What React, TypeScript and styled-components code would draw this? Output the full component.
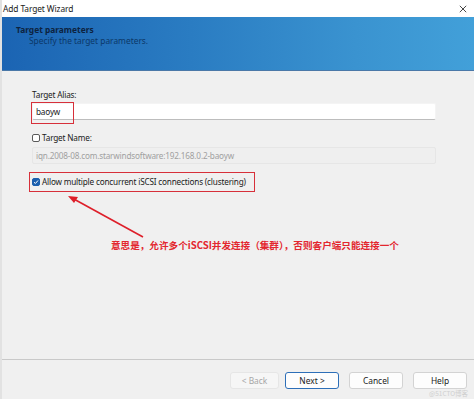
import React from "react";
import styled, { createGlobalStyle } from "styled-components";

const Global = createGlobalStyle`
  html, body { margin: 0; padding: 0; background: #f0f0f0; }
  body { font-family: "Noto Sans", "Open Sans", sans-serif; }
`;

const Window = styled.div`
  position: relative;
  width: 474px;
  height: 399px;
  background: #f0f0f0;
  display: flex;
  flex-direction: column;
  overflow: hidden;
  border-left: 2px solid #e2e2e2;
  box-sizing: border-box;
`;

const TitleBar = styled.div`
  height: 17px;
  background: #ffffff;
  display: flex;
  align-items: center;
  justify-content: space-between;
  padding: 0 7px 0 1px;
  font-size: 8.4px;
  letter-spacing: -0.1px;
  color: #1a1a1a;
  flex-shrink: 0;
`;

const Header = styled.div`
  height: 54px;
  flex-shrink: 0;
  background: linear-gradient(90deg, #1b64b3 0%, #2a7cc2 40%, #3a93d0 75%, #42a0d9 100%);
  border-bottom: 1px solid #4a78a8;
  display: flex;
  flex-direction: column;
  padding: 7px 0 0 14px;
  box-sizing: border-box;
`;

const HeaderTitle = styled.div`
  font-size: 8.4px;
  font-weight: 700;
  color: #0d2340;
  line-height: 11px;
`;

const HeaderSub = styled.div`
  font-size: 8.4px;
  color: #0c3868;
  line-height: 11px;
  padding-left: 13px;
`;

const Content = styled.div`
  position: relative;
  flex: 1;
  display: flex;
  flex-direction: column;
  padding: 18px 38px 0 30px;
  font-size: 8.2px;
  letter-spacing: -0.18px;
  color: #1a1a1a;
`;

const Label = styled.div`
  line-height: 11px;
  height: 11px;
  margin-bottom: 3px;
`;

const TextInput = styled.div<{ $disabled?: boolean }>`
  height: 17px;
  box-sizing: border-box;
  display: flex;
  align-items: center;
  padding-left: 3px;
  background: ${(p) => (p.$disabled ? "#efefef" : "#ffffff")};
  border: 1px solid ${(p) => (p.$disabled ? "#e6e6e6" : "#f4f4f4")};
  border-bottom: 1px solid ${(p) => (p.$disabled ? "#e6e6e6" : "#bdbdbd")};
  border-radius: 2px;
  color: ${(p) => (p.$disabled ? "#a0a0a0" : "#1a1a1a")};
`;

const CheckRow = styled.label<{ $top: number; $bottom?: number }>`
  display: flex;
  align-items: center;
  gap: 2px;
  margin-top: ${(p) => p.$top}px;
  margin-bottom: ${(p) => p.$bottom ?? 0}px;
  line-height: 11px;
`;

const Box = styled.span<{ $checked?: boolean }>`
  width: 8px;
  height: 8px;
  box-sizing: border-box;
  border-radius: 2px;
  border: 1px solid ${(p) => (p.$checked ? "#1b5fae" : "#5a5a5a")};
  background: ${(p) => (p.$checked ? "#1b5fae" : "#ffffff")};
  display: inline-flex;
  align-items: center;
  justify-content: center;
  flex-shrink: 0;
`;

const Note = styled.div`
  margin: 52px 0 0 79px;
  font-family: "Noto Sans CJK SC", "Noto Sans", sans-serif;
  font-weight: 700;
  font-size: 9.6px;
  letter-spacing: 0;
  color: #e3262e;
  line-height: 12px;
  white-space: nowrap;
`;

const Highlight = styled.div<{ $x: number; $y: number; $w: number; $h: number }>`
  position: absolute;
  left: ${(p) => p.$x}px;
  top: ${(p) => p.$y}px;
  width: ${(p) => p.$w}px;
  height: ${(p) => p.$h}px;
  border: 1.5px solid #d7303a;
  box-sizing: border-box;
  pointer-events: none;
`;

const ArrowSvg = styled.svg`
  position: absolute;
  left: 0;
  top: 0;
  pointer-events: none;
`;

const Footer = styled.div`
  height: 40px;
  flex-shrink: 0;
  border-top: 1px solid #c9c9c9;
  display: flex;
  justify-content: flex-end;
  align-items: flex-start;
  padding: 12px 7px 0 0;
  gap: 10px;
  box-sizing: border-box;
`;

const Button = styled.div<{ $variant?: "default" | "primary" | "disabled"; $w?: number; $mr?: number }>`
  width: ${(p) => p.$w ?? 54}px;
  height: 17px;
  margin-right: ${(p) => p.$mr ?? 0}px;
  box-sizing: border-box;
  border-radius: 3px;
  display: flex;
  align-items: center;
  justify-content: center;
  font-size: 8.4px;
  background: ${(p) => (p.$variant === "disabled" ? "#f6f6f6" : "#fdfdfd")};
  color: ${(p) => (p.$variant === "disabled" ? "#a6a6a6" : "#1a1a1a")};
  border: 1px solid
    ${(p) =>
      p.$variant === "primary" ? "#2d6fb8" : p.$variant === "disabled" ? "#e6e6e6" : "#d3d3d3"};
`;

const Watermark = styled.div`
  position: absolute;
  right: 6px;
  bottom: 1px;
  font-family: "Noto Sans CJK SC", "Noto Sans", sans-serif;
  font-size: 6.5px;
  color: #cfcfcf;
`;

export default function App() {
  return (
    <>
      <Global />
      <Window>
        <TitleBar>
          <span>Add Target Wizard</span>
          <svg width="8" height="8" viewBox="0 0 8 8">
            <path d="M0.8 0.8 L7.2 7.2 M7.2 0.8 L0.8 7.2" stroke="#333" strokeWidth="0.9" />
          </svg>
        </TitleBar>
        <Header>
          <HeaderTitle>Target parameters</HeaderTitle>
          <HeaderSub>Specify the target parameters.</HeaderSub>
        </Header>
        <Content>
          <Label>Target Alias:</Label>
          <TextInput>baoyw</TextInput>
          <CheckRow $top={12} $bottom={4}>
            <Box />
            <span>Target Name:</span>
          </CheckRow>
          <TextInput $disabled>
            iqn.2008-08.com.starwindsoftware:192.168.0.2-baoyw
          </TextInput>
          <CheckRow $top={12}>
            <Box $checked>
              <svg width="6" height="6" viewBox="0 0 6 6">
                <path d="M1 3.2 L2.4 4.5 L5 1.5" stroke="#fff" strokeWidth="1" fill="none" />
              </svg>
            </Box>
            <span>Allow multiple concurrent iSCSI connections (clustering)</span>
          </CheckRow>
          <Note>意思是，允许多个iSCSI并发连接（集群），否则客户端只能连接一个</Note>
          <Highlight $x={29} $y={31} $w={43} $h={22} />
          <Highlight $x={27} $y={101} $w={226} $h={20} />
          <ArrowSvg width="300" height="200">
            <path d="M141 166 L70 127" stroke="#de1f2a" strokeWidth="1.6" />
            <path d="M66 125 L76 126 L72 132 Z" fill="#de1f2a" />
          </ArrowSvg>
        </Content>
        <Footer>
          <Button $variant="disabled" $w={49} $mr={-4}>&lt; Back</Button>
          <Button $variant="primary">Next &gt;</Button>
          <Button>Cancel</Button>
          <Button>Help</Button>
        </Footer>
        <Watermark>@51CTO博客</Watermark>
      </Window>
    </>
  );
}
